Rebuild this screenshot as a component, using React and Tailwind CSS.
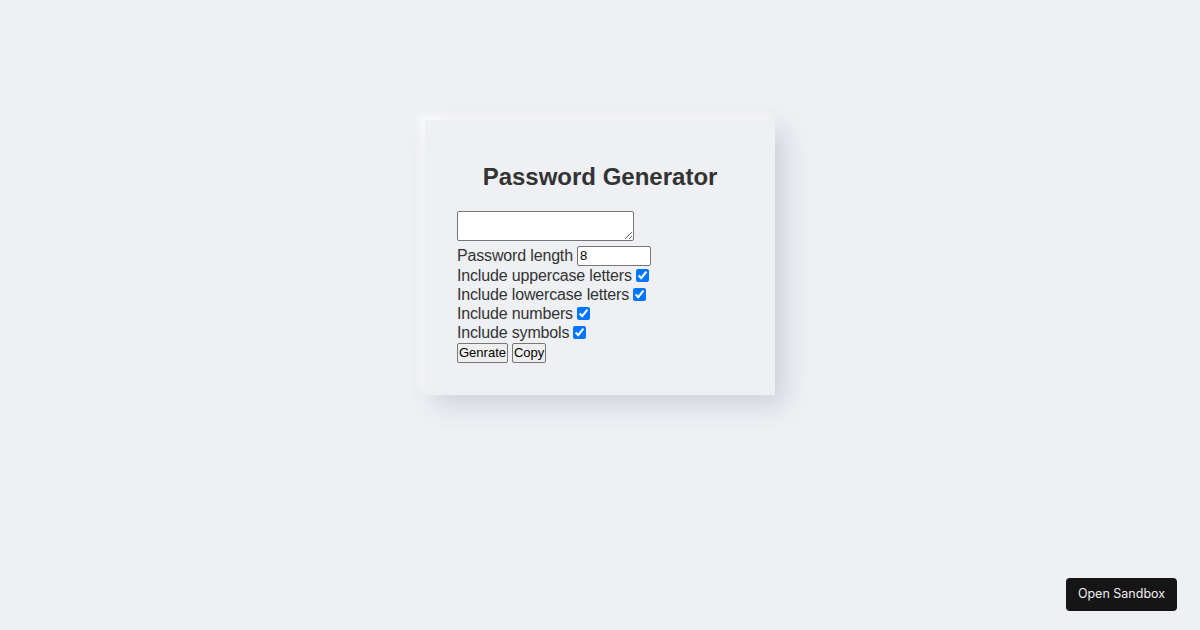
import { useState } from "react";

const options = [
  { key: "upper", label: "Include uppercase letters" },
  { key: "lower", label: "Include lowercase letters" },
  { key: "numbers", label: "Include numbers" },
  { key: "symbols", label: "Include symbols" },
];

export default function App() {
  const [length, setLength] = useState(8);
  const [checks, setChecks] = useState({ upper: true, lower: true, numbers: true, symbols: true });
  const [password, setPassword] = useState("");

  return (
    <div className="relative w-full min-h-[630px] bg-[#eef0f4] font-['Liberation_Sans',Arial,sans-serif] text-[#333]">
      <div className="flex justify-center pt-[120px]">
        <div className="w-[350px] bg-[#eef0f4] px-8 pt-8 pb-8 shadow-[10px_10px_24px_#cfd1d8,-4px_-4px_8px_#ffffff]">
          <h1 className="mt-[11px] mb-[20px] text-center text-[24px] leading-[28px] font-bold">
            Password Generator
          </h1>
          <textarea
            value={password}
            onChange={(e) => setPassword(e.target.value)}
            className="block w-[177px] h-[30px] resize border border-[#767676] rounded-[2px] bg-white text-[13px] px-[2px]"
          />
          <div className="mt-[4px] flex h-[21px] items-center text-[16px] leading-[19px] tracking-[-0.16px]">
            <span>Password length</span>
            <input
              type="number"
              value={length}
              onChange={(e) => setLength(e.target.value)}
              className="ml-[4px] w-[74px] h-[20px] border border-[#767676] rounded-[2px] bg-white px-[2px] text-[13px] tracking-normal text-black [appearance:textfield]"
            />
          </div>
          {options.map((o) => (
            <div key={o.key} className="flex h-[19px] items-center text-[16px] leading-[19px] tracking-[-0.16px]">
              <span>{o.label}</span>
              <input
                type="checkbox"
                checked={checks[o.key]}
                onChange={() => setChecks({ ...checks, [o.key]: !checks[o.key] })}
                className="ml-[4px] w-[13px] h-[13px] accent-[#0075ff]"
              />
            </div>
          ))}
          <div className="mt-[1px] flex gap-[4px]">
            <button className="h-[20px] px-[1px] border border-[#767676] rounded-[2px] bg-[#efefef] text-[13px] text-black leading-[16px]">
              Genrate
            </button>
            <button className="h-[20px] px-[1px] border border-[#767676] rounded-[2px] bg-[#efefef] text-[13px] text-black leading-[16px]">
              Copy
            </button>
          </div>
        </div>
      </div>
      <button className="absolute right-[23px] bottom-[19px] h-[33px] w-[111px] rounded-[4px] bg-[#151515] text-[12.5px] text-[#f0f0f0] font-['Inter',sans-serif]">
        Open Sandbox
      </button>
    </div>
  );
}
